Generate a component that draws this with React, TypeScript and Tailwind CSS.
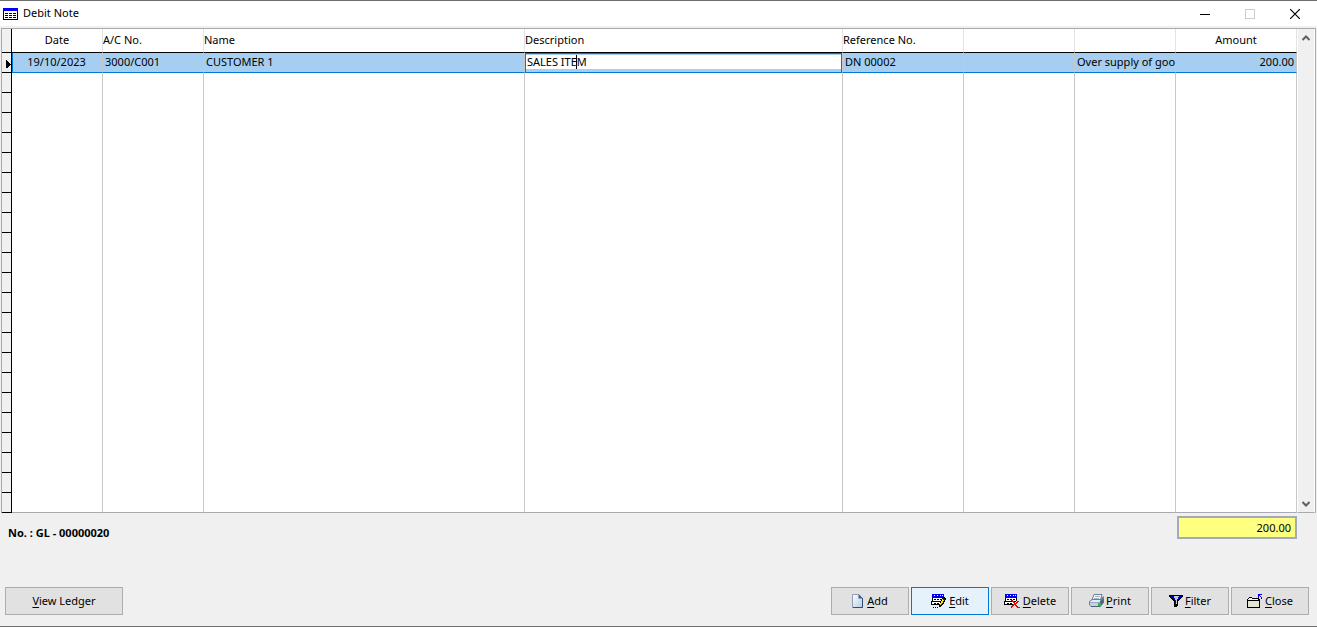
import { useState } from "react";
import type { ReactNode } from "react";

const blankRows = Array.from({ length: 22 }, (_, i) => i);

function TableGlyph() {
  return (
    <svg width="15" height="12" viewBox="0 0 15 12" shapeRendering="crispEdges" aria-hidden="true">
      <rect width="15" height="12" fill="#000" />
      <rect x="1" y="3" width="13" height="8" fill="#fff" />
      <rect width="15" height="3" fill="#0000f0" />
      <path d="M2 5.5h3M6 5.5h3M10 5.5h3M2 7.5h3M6 7.5h3M10 7.5h3M2 9.5h3M6 9.5h3M10 9.5h3" stroke="#000" />
    </svg>
  );
}

function AddIcon() {
  return (
    <svg width="13" height="14" viewBox="0 0 13 14" aria-hidden="true">
      <defs>
        <linearGradient id="page" x1="0" y1="0" x2="1" y2="1">
          <stop offset="0" stopColor="#ffffff" />
          <stop offset="1" stopColor="#b4cbe2" />
        </linearGradient>
      </defs>
      <path d="M.5.5h6l4 4v9H.5z" fill="url(#page)" stroke="#8c9fb5" />
      <path d="M10.5 4v9.5H1" fill="none" stroke="#304a70" />
      <path d="M6.5 0l4.500 4.500h-4.500z" fill="#3a5c8c" />
    </svg>
  );
}

function GridSheet() {
  return (
    <>
      <path d="M1 0h12v4H1z" fill="#0000f0" />
      <path d="M3 1.5h1M6 1.5h1M9 1.5h1M11 1.5h1" stroke="#fff" />
      <path d="M1 4h12v3H1zM0 7h12v4H0z" fill="#fff" />
      <path d="M1.5 4v3M12.5 4v3M0 7.5h12M.5 7v3M0 10.5h10" stroke="#000" fill="none" />
      <path d="M3 5.5h2M6 5.5h2M9 5.5h2M3 9.5h2M6 9.5h2" stroke="#000" />
    </>
  );
}

function EditIcon() {
  return (
    <svg width="16" height="14" viewBox="0 0 16 14" shapeRendering="crispEdges" aria-hidden="true">
      <GridSheet />
      <path d="M2 13.5h1M4 13.5h1M6 13.5h1" stroke="#000" />
      <path d="M12 3h2v1h1v2h-1v2h-1v2h-1v1h-1v1h-1v1H8v-3h1V8h1V6h1V4h1z" fill="#000" />
      <path d="M11 5h1v1h1v1h-1v2h-1v1h-1v1H9v-2h1V7h1z" fill="#ffe600" />
      <path d="M12 4h1v1h1v1h-2z" fill="#900000" />
    </svg>
  );
}

function DeleteIcon() {
  return (
    <svg width="17" height="14" viewBox="0 0 17 14" shapeRendering="crispEdges" aria-hidden="true">
      <GridSheet />
      <path d="M7 6h2v1h1v1h1v1h1V8h1V7h2v1h-1v1h-1v1h-1v1h1v1h1v1h2v1h-3v-1h-1v-1h-1v-1h-1v1H9v1H8v1H7v-2h1v-1h1v-1h1V9H9V8H8V7H7z" fill="#f00000" />
    </svg>
  );
}

function PrintIcon() {
  return (
    <svg width="15" height="14" viewBox="0 0 15 14" aria-hidden="true">
      <path d="M5 .5h8L11.500 6H3z" fill="#f5f9fd" stroke="#6c7f94" />
      <path d="M6 2.500h5M5 4.500h5" stroke="#9db0c4" />
      <path d="M0 7.500L3 5h8l3-2.500h1v6L11.500 13H2L0 11z" fill="#6d829b" />
      <path d="M1 7.500L3.500 6h8L10.500 8H1z" fill="#e5edf5" />
      <path d="M1 8.500h10v3.500H2l-1-1z" fill="#c3d3e3" />
      <path d="M11.500 7.500l3-3v4l-3 3.500z" fill="#4a5f7a" />
      <path d="M2 12.500h9" stroke="#4c6078" />
      <path d="M9 9h3v3H9z" fill="#19c832" />
    </svg>
  );
}

function FilterIcon() {
  return (
    <svg width="14" height="12" viewBox="0 0 14 12" shapeRendering="crispEdges" aria-hidden="true">
      <path d="M0 0h14v2h-1v1h-1v1h-1v1h-1v1H9v5H8v1H5V6H4V5H3V4H2V3H1V2H0z" fill="#000" />
      <path d="M2 1h3v2h1v2h1v5H6V5H5V4H4V3H3V2H2z" fill="#0000f0" />
      <path d="M5 1h5v1H9v2H8v5H7V5H6V3H5z" fill="#c4ccd6" />
      <path d="M10 1h2v1h-1v1h-1v1H9v1H8V4h1V2h1z" fill="#0000f0" />
    </svg>
  );
}

function CloseIcon() {
  return (
    <svg width="16" height="14" viewBox="0 0 16 14" shapeRendering="crispEdges" aria-hidden="true">
      <defs>
        <pattern id="folder" width="2" height="2" patternUnits="userSpaceOnUse">
          <rect width="2" height="2" fill="#e8e8d8" />
          <path d="M0 0h1v1H0zM1 1h1v1H1z" fill="#fff030" />
        </pattern>
      </defs>
      <path d="M1 4h1V3h3v1h7v1h1v9H0V5h1z" fill="#000" />
      <path d="M2 4h3v1h6v1H1V5h1z" fill="#f4f4f4" />
      <path d="M1 7h11v6H1z" fill="url(#folder)" />
      <path d="M11 0h4v1h-2v1h1v1h1v2h-1V3h-1V2h-1v2h-1z" fill="#0000f0" />
    </svg>
  );
}

type ActionProps = { hot: string; rest: string; icon?: ReactNode; active?: boolean; wide?: boolean };

function ActionButton({ hot, rest, icon, active, wide }: ActionProps) {
  return (
    <button
      type="button"
      className={`flex h-7 items-center justify-center gap-[2px] border ${wide ? "w-[118px]" : "w-[78px]"} ${
        active ? "border-[#0078d7] bg-[#e5f1fb]" : "border-[#adadad] bg-[#e1e1e1]"
      }`}
    >
      {icon}
      <span>
        <span className="underline underline-offset-2">{hot}</span>
        {rest}
      </span>
    </button>
  );
}

function TitleBar() {
  return (
    <header className="flex h-[26px] items-center border-t border-[#6e6e6e] bg-white pl-[3px]">
      <TableGlyph />
      <h1 className="ml-[5px] flex-1 pb-[2px]">Debit Note</h1>
      <div className="flex items-center">
        <button type="button" aria-label="Minimize" className="flex h-6 w-[45px] items-center justify-center">
          <svg width="10" height="10" viewBox="0 0 10 10" shapeRendering="crispEdges"><path d="M0 5.5h10" stroke="#000" /></svg>
        </button>
        <button type="button" aria-label="Maximize" disabled className="flex h-6 w-[45px] items-center justify-center">
          <svg width="10" height="10" viewBox="0 0 10 10" shapeRendering="crispEdges"><path d="M.5.5h9v9h-9z" fill="none" stroke="#ccc" /></svg>
        </button>
        <button type="button" aria-label="Close window" className="flex h-6 w-[45px] items-center justify-center pl-px">
          <svg width="10" height="10" viewBox="0 0 10 10"><path d="M0 0l10 10M10 0L0 10" stroke="#000" strokeWidth="1.2" /></svg>
        </button>
      </div>
    </header>
  );
}

function ScrollBar() {
  return (
    <div className="flex w-[18px] flex-col justify-between border-x border-b border-x-white border-b-[#a9a9b0] bg-[#f0f0f0]">
      <button type="button" aria-label="Scroll up" className="flex h-[17px] items-center justify-center">
        <svg width="8" height="6" viewBox="0 0 8 6"><path d="M.5 5L4 1.500 7.500 5" fill="none" stroke="#606060" strokeWidth="2" /></svg>
      </button>
      <button type="button" aria-label="Scroll down" className="flex h-[17px] items-center justify-center">
        <svg width="8" height="6" viewBox="0 0 8 6"><path d="M.5 1L4 4.500 7.500 1" fill="none" stroke="#606060" strokeWidth="2" /></svg>
      </button>
    </div>
  );
}

const head = "border-r border-b border-r-[#e3e3e3] border-b-black p-0 pb-[2px] font-normal";
const cell = "border-r border-b border-r-[#c8c8c8] border-b-[#0078d7] bg-[#a5cef0] p-0 overflow-hidden";
const textCell = `${cell} pb-[2px] pl-[2px]`;
const blank = "border-r border-r-[#c8c8c8] p-0 group-last:border-b group-last:border-b-[#a9a9b0]";
const gutter = "border-r border-b border-black bg-[#f0f0f0] p-0";

export default function App() {
  const [description, setDescription] = useState("SALES ITEM");
  return (
    <div className="flex min-h-screen flex-col border-b border-[#6e6e6e] bg-[#f0f0f0] font-['Noto_Sans','Open_Sans',sans-serif] text-[11px] leading-4 text-black">
      <TitleBar />
      <main className="flex flex-1 flex-col">
        <div className="mx-px mt-[2px] flex border border-b-0 border-[#a9a9a9] bg-white">
          <div className="min-w-0 flex-1">
            <table className="w-full table-fixed border-separate border-spacing-0 whitespace-nowrap">
              <colgroup>
                <col className="w-[10px]" />
                <col className="w-[91px]" />
                <col className="w-[101px]" />
                <col />
                <col className="w-[318px]" />
                <col className="w-[121px]" />
                <col className="w-[111px]" />
                <col className="w-[101px]" />
                <col className="w-[121px]" />
              </colgroup>
              <thead>
                <tr className="h-6">
                  <th className={gutter} />
                  <th className={`${head} text-center`}>Date</th>
                  <th className={`${head} text-left`}>A/C No.</th>
                  <th className={`${head} text-left`}>Name</th>
                  <th className={`${head} text-left`}>Description</th>
                  <th className={`${head} text-left`}>Reference No.</th>
                  <th className={head} />
                  <th className={head} />
                  <th className={`${head} text-center`}>Amount</th>
                </tr>
              </thead>
              <tbody>
                <tr className="h-5">
                  <td className={`${gutter} pt-[2px]`}>
                    <svg className="ml-1" width="5" height="8" viewBox="0 0 5 8" shapeRendering="crispEdges" aria-hidden="true">
                      <path d="M0 0h1v1h1v1h1v1h1v1h1v1H4v1H3v1H2v1H0z" fill="#000" />
                    </svg>
                  </td>
                  <td className={`${cell} border-l border-l-[#0078d7] pr-[2px] pb-[2px] text-center`}>19/10/2023</td>
                  <td className={textCell}>3000/C001</td>
                  <td className={textCell}>CUSTOMER 1</td>
                  <td className={cell}>
                    <div className="relative h-[19px] border border-b-0 border-[#0078d7] pt-px">
                      <input
                        aria-label="Description"
                        value={description}
                        onChange={(e) => setDescription(e.target.value)}
                        className="block h-[14px] w-full bg-white pl-px leading-[14px] outline-none"
                      />
                      <span className="absolute top-px left-[50px] h-[14px] w-px bg-black" />
                    </div>
                  </td>
                  <td className={textCell}>DN 00002</td>
                  <td className={cell} />
                  <td className={textCell}>Over supply of goods</td>
                  <td className={`${cell} border-r-[#0078d7] pr-[2px] pb-[2px] text-right`}>200.00</td>
                </tr>
                {blankRows.map((row) => (
                  <tr key={row} className="group h-5">
                    <td className={gutter} />
                    <td className={blank} />
                    <td className={blank} />
                    <td className={blank} />
                    <td className={blank} />
                    <td className={blank} />
                    <td className={blank} />
                    <td className={blank} />
                    <td className={blank} />
                  </tr>
                ))}
              </tbody>
            </table>
          </div>
          <ScrollBar />
        </div>
        <div className="flex items-start justify-between pt-[3px] pr-5 pl-2">
          <p className="pt-[9px] font-bold">No. : GL - 00000020</p>
          <input
            aria-label="Total amount"
            readOnly
            value="200.00"
            className="h-[23px] w-[120px] border-2 border-[#a3abb8] bg-[#ffff80] pr-1 pb-px text-right outline-none"
          />
        </div>
      </main>
      <footer className="flex items-center justify-between pr-2 pb-[11px] pl-[5px]">
        <ActionButton hot="V" rest="iew Ledger" wide />
        <div className="flex gap-[2px]">
          <ActionButton hot="A" rest="dd" icon={<AddIcon />} />
          <ActionButton hot="E" rest="dit" icon={<EditIcon />} active />
          <ActionButton hot="D" rest="elete" icon={<DeleteIcon />} />
          <ActionButton hot="P" rest="rint" icon={<PrintIcon />} />
          <ActionButton hot="F" rest="ilter" icon={<FilterIcon />} />
          <ActionButton hot="C" rest="lose" icon={<CloseIcon />} />
        </div>
      </footer>
    </div>
  );
}
